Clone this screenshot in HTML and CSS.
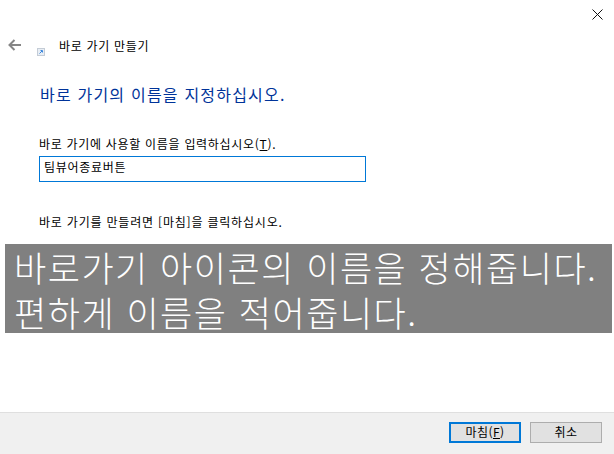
FILE: index.html
```html
<!DOCTYPE html>
<html lang="ko">
<head>
<meta charset="utf-8">
<title>바로 가기 만들기</title>
<link rel="stylesheet" href="styles.css">
</head>
<body>
<div class="window">
  <div class="titlebar">
    <svg class="close" width="11" height="11" viewBox="0 0 11 11"><path d="M.5.5l10 10M10.500.5l-10 10" stroke="#111" stroke-width="1" fill="none"/></svg>
  </div>
  <div class="nav">
    <svg class="back" width="14" height="12" viewBox="0 0 14 12"><path d="M13 6H2M6.500 1L1.500 6l5 5" stroke="#858585" stroke-width="2" fill="none"/></svg>
    <svg class="shortcut" width="8" height="8" viewBox="0 0 8 8"><rect width="8" height="8" fill="#e8eef5"/><rect x=".5" y=".5" width="7" height="7" fill="none" stroke="#c4ccd6"/><path d="M2.500 5.500L5 3M3.500 2.500H5.500V4.500" stroke="#3a86dc" stroke-width="1" fill="none"/></svg>
    <span class="nav-title">바로 가기 만들기</span>
  </div>
  <h1 class="heading">바로 가기의 이름을 지정하십시오.</h1>
  <label class="label">바로 가기에 사용할 이름을 입력하십시오(<u>T</u>).</label>
  <div class="field">팀뷰어종료버튼</div>
  <p class="hint">바로 가기를 만들려면 [마침]을 클릭하십시오.</p>
  <div class="caption">바로가기 아이콘의 이름을 정해줍니다.<br>편하게 이름을 적어줍니다.</div>
  <div class="footer">
    <div class="btn btn-default">마침(<u>F</u>)</div>
    <div class="btn">취소</div>
  </div>
</div>
</body>
</html>
```
FILE: styles.css
```css
html, body {
  margin: 0;
  padding: 0;
  background: #fff;
}
.window {
  width: 614px;
  height: 454px;
  display: flex;
  flex-direction: column;
  overflow: hidden;
  font-family: "Noto Sans CJK KR", "Noto Sans", sans-serif;
  font-size: 12px;
  letter-spacing: .7px;
  color: #000;
}
.titlebar {
  height: 30px;
  display: flex;
  justify-content: flex-end;
  align-items: flex-start;
  padding: 9px 11px 0 0;
  box-sizing: border-box;
}
.nav {
  height: 30px;
  display: flex;
  align-items: center;
  padding-left: 8px;
}
.back { margin-top: -1px; }
.shortcut { margin: 13px 0 0 15px; }
.nav-title {
  margin-left: 14px;
  letter-spacing: .7px;
}
.heading {
  margin: 23px 0 0 40px;
  height: 22px;
  line-height: 22px;
  font-size: 16px;
  letter-spacing: 1.200px;
  font-weight: 400;
  color: #003399;
}
.label {
  display: block;
  margin: 30px 0 0 39px;
  height: 17px;
  line-height: 17px;
}
.field {
  margin: 4px 0 0 39px;
  width: 327px;
  height: 26px;
  box-sizing: border-box;
  border: 1px solid #0078d7;
  padding-left: 4px;
  line-height: 20px;
}
.hint {
  margin: 31px 0 0 39px;
  height: 17px;
  line-height: 17px;
  letter-spacing: .8px;
}
.caption {
  margin: 14px 2px 0 5px;
  height: 89px;
  background: #808080;
  color: #fff;
  font-size: 35px;
  font-weight: 300;
  letter-spacing: 1.500px;
  line-height: 45px;
  padding-left: 9px;
  box-sizing: border-box;
  white-space: nowrap;
}
.footer {
  margin-top: auto;
  height: 42px;
  box-sizing: border-box;
  background: #f0f0f0;
  border-top: 1px solid #dfdfdf;
  display: flex;
  justify-content: flex-end;
  align-items: flex-start;
  gap: 9px;
  padding: 9px 12px 0 0;
}
.btn {
  width: 72px;
  height: 21px;
  box-sizing: border-box;
  background: #e1e1e1;
  border: 1px solid #adadad;
  text-align: center;
  line-height: 18px;
  letter-spacing: .4px;
}
.btn-default {
  border: 2px solid #0078d7;
  line-height: 16px;
}
```
